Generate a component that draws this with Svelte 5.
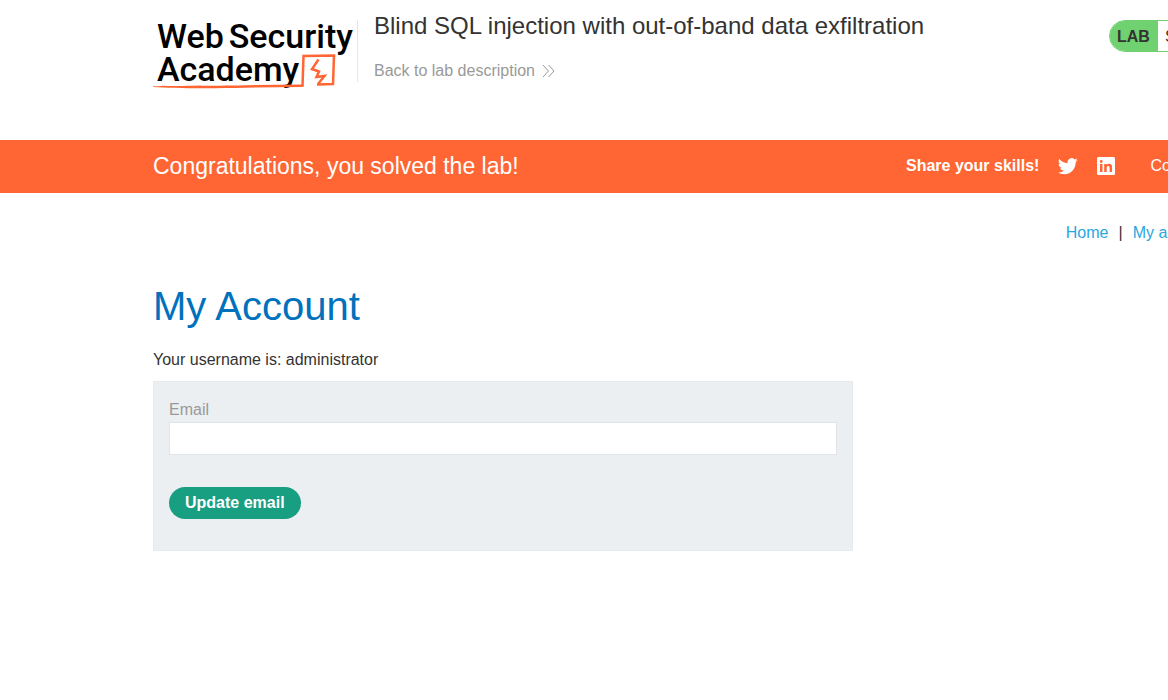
<script lang="ts">
  let email = $state('');

  function updateEmail(event: SubmitEvent) {
    event.preventDefault();
  }
</script>

<div class="page">
  <header class="container lab-header">
    <a class="logo" href="#academy" aria-label="Web Security Academy">
      <span class="logo-line"><span>Web</span><span>Security</span></span>
      <span class="logo-line">Academy</span>
      <svg class="logo-mark" viewBox="0 0 200 70" aria-hidden="true">
        <path class="underline" d="M0 66.200 C20 65.600 60 66 92 65.200 L150 64.500 L151 65.500 L150 67 L92 67.700 C60 68.500 20 68.400 0 67z" />
        <path d="M149.500 66 L150.500 36 L181 35.500 L180 64 L164 64.500" />
        <path d="M165.500 39.500 L159 49 L166 51.500 L163.500 57 L171.500 56 L165 64" />
      </svg>
    </a>
    <div class="title">
      <h2>Blind SQL injection with out-of-band data exfiltration</h2>
      <a class="back" href="#description">
        Back to lab description
        <svg width="13" height="12" viewBox="0 0 13 12" aria-hidden="true">
          <path d="M1 0 L6.500 6 L1 12 M6.500 0 L12 6 L6.500 12" />
        </svg>
      </a>
    </div>
    <div class="status">
      <span class="status-tag">LAB</span>
      <span class="status-text">Solved</span>
    </div>
  </header>

  <section class="banner">
    <div class="container banner-row">
      <h4>Congratulations, you solved the lab!</h4>
      <div class="share">
        <span class="share-label">Share your skills!</span>
        <a class="social" href="#twitter" aria-label="Twitter">
          <svg width="20" height="20" viewBox="0 0 24 24" aria-hidden="true">
            <path d="M23.6 4.900a9.700 9.700 0 0 1-2.800.8 4.900 4.900 0 0 0 2.100-2.700 9.700 9.700 0 0 1-3.100 1.200 4.850 4.850 0 0 0-8.300 4.400A13.800 13.800 0 0 1 1.600 3.500a4.850 4.850 0 0 0 1.500 6.500 4.800 4.800 0 0 1-2.200-.6v.1a4.850 4.850 0 0 0 3.900 4.700 4.900 4.900 0 0 1-2.200.1 4.850 4.850 0 0 0 4.500 3.400A9.800 9.800 0 0 1 0 19.700 13.800 13.800 0 0 0 7.400 21.900c8.900 0 13.800-7.400 13.800-13.800v-.6a9.800 9.800 0 0 0 2.400-2.600z" />
          </svg>
        </a>
        <a class="social" href="#linkedin" aria-label="LinkedIn">
          <svg width="20" height="20" viewBox="0 0 20 20" aria-hidden="true">
            <path fill-rule="evenodd" d="M2.500 1h15A1.500 1.500 0 0 1 19 2.500v15a1.500 1.500 0 0 1-1.500 1.500h-15A1.500 1.500 0 0 1 1 17.500v-15A1.500 1.500 0 0 1 2.500 1zM4 8v8h2.500V8zM5.250 4a1.450 1.450 0 1 0 0 2.900 1.450 1.450 0 0 0 0-2.900zM8.200 8v8h2.500v-4c0-1.200.4-2 1.500-2s1.400.9 1.400 2v4h2.500v-4.600c0-2.300-.8-3.600-2.900-3.600-1.200 0-2 .6-2.500 1.300V8z" />
          </svg>
        </a>
        <a class="continue" href="#continue">Continue learning</a>
      </div>
    </div>
  </section>

  <main class="container">
    <nav>
      <a href="#home">Home</a>
      <span>|</span>
      <a href="#my-account">My account</a>
      <span>|</span>
      <a href="#logout">Log out</a>
    </nav>
    <h1>My Account</h1>
    <p>Your username is: administrator</p>
    <form onsubmit={updateEmail}>
      <label for="email">Email</label>
      <input id="email" type="email" bind:value={email} />
      <button type="submit">Update email</button>
    </form>
  </main>
</div>

<style>
  :global(body) {
    margin: 0;
    background: #fff;
  }

  .page {
    overflow: hidden;
    font-family: "Liberation Sans", Arial, sans-serif;
    font-size: 16px;
    line-height: 20px;
    color: #333332;
  }

  a {
    text-decoration: none;
  }

  .container {
    box-sizing: border-box;
    /* wide layout, runs off the right side on narrow windows */
    min-width: 1170px;
    margin-left: 153px;
    margin-right: 153px;
  }

  .lab-header {
    display: flex;
    align-items: flex-start;
    height: 140px;
    padding-top: 20px;
  }

  .logo {
    position: relative;
    box-sizing: border-box;
    width: 204px;
    height: 70px;
    padding-left: 4px;
    font-family: Roboto, sans-serif;
    font-size: 34px;
    font-weight: 500;
    line-height: 33px;
    color: #000;
  }

  .logo-line {
    display: flex;
    gap: 5px;
    white-space: nowrap;
  }

  .logo-mark {
    position: absolute;
    top: 0;
    left: 0;
    width: 200px;
    height: 70px;
    fill: none;
    stroke: #ff6633;
    stroke-width: 2.5;
  }

  .logo-mark .underline {
    fill: #ff6633;
    stroke: none;
  }

  .title {
    flex: 1;
    height: 62px;
    padding-left: 16px;
    border-left: 1px solid #e6e6e6;
  }

  h2 {
    margin: 0 0 29px;
    font-size: 24px;
    font-weight: 400;
    line-height: 12px;
  }

  .back {
    display: inline-flex;
    align-items: center;
    gap: 7px;
    color: #999;
  }

  .back svg {
    fill: none;
    stroke: #999;
  }

  .status {
    display: flex;
    box-sizing: border-box;
    width: 214px;
    height: 32px;
    border: 1px solid #6fd16f;
    border-radius: 16px;
    overflow: hidden;
    line-height: 31px;
  }

  .status-tag {
    padding: 0 8px 0 7px;
    background: #6fd16f;
    font-weight: 700;
  }

  .status-text {
    padding-left: 7px;
  }

  .banner {
    background: #ff6633;
    color: #fff;
  }

  .banner-row {
    display: flex;
    align-items: center;
    justify-content: space-between;
    box-sizing: border-box;
    height: 53px;
    padding-bottom: 1px;
  }

  h4 {
    margin: 0;
    font-size: 23px;
    font-weight: 400;
  }

  .share {
    display: flex;
    align-items: center;
    width: 417px;
  }

  .share-label {
    margin-right: 19px;
    font-weight: 700;
  }

  .social {
    display: flex;
    margin-right: 18px;
    fill: #fff;
  }

  .continue {
    margin-left: 16px;
    color: #fff;
  }

  nav {
    display: flex;
    justify-content: flex-end;
    gap: 10px;
    padding: 30px 31px 0 0;
  }

  nav a {
    color: #29a7df;
  }

  h1 {
    margin: 40px 0 21px;
    font-size: 40px;
    font-weight: 400;
    line-height: 46px;
    color: #0071bc;
  }

  p {
    margin: 0 0 11px;
  }

  form {
    display: flex;
    flex-direction: column;
    align-items: flex-start;
    box-sizing: border-box;
    max-width: 700px;
    padding: 18px 15px 31px;
    border: 1px solid #e8ebee;
    background: #ebeff2;
  }

  label {
    margin-bottom: 2px;
    color: #999;
  }

  input {
    box-sizing: border-box;
    width: 100%;
    height: 33px;
    margin-bottom: 32px;
    padding: 4px 8px;
    border: 1px solid #e0e4e6;
    background: #fff;
    font: inherit;
  }

  button {
    height: 32px;
    padding: 0 16px;
    border: 0;
    border-radius: 16px;
    background: #189e80;
    color: #fff;
    font: inherit;
    font-weight: 700;
    cursor: pointer;
  }
</style>
